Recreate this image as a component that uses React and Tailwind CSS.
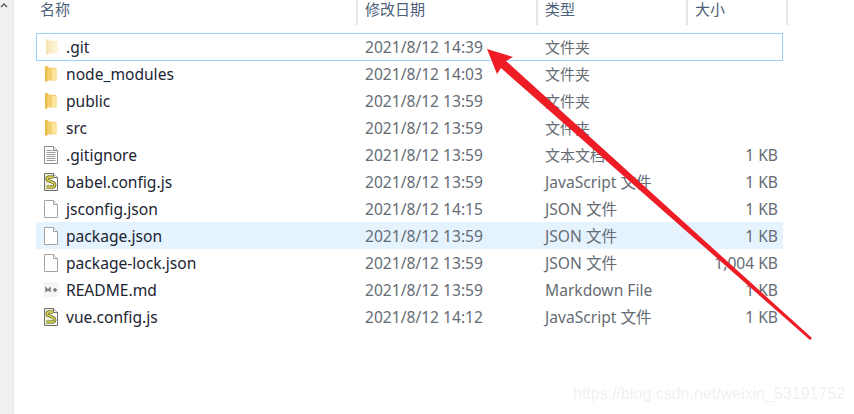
const files = [
  { name: ".git", date: "2021/8/12 14:39", type: "文件夹", size: "", icon: "folderFaded", box: true },
  { name: "node_modules", date: "2021/8/12 14:03", type: "文件夹", size: "", icon: "folder" },
  { name: "public", date: "2021/8/12 13:59", type: "文件夹", size: "", icon: "folder" },
  { name: "src", date: "2021/8/12 13:59", type: "文件夹", size: "", icon: "folder" },
  { name: ".gitignore", date: "2021/8/12 13:59", type: "文本文档", size: "1 KB", icon: "text" },
  { name: "babel.config.js", date: "2021/8/12 13:59", type: "JavaScript 文件", size: "1 KB", icon: "script" },
  { name: "jsconfig.json", date: "2021/8/12 14:15", type: "JSON 文件", size: "1 KB", icon: "blank" },
  { name: "package.json", date: "2021/8/12 13:59", type: "JSON 文件", size: "1 KB", icon: "blank", hover: true },
  { name: "package-lock.json", date: "2021/8/12 13:59", type: "JSON 文件", size: "1,004 KB", icon: "blank" },
  { name: "README.md", date: "2021/8/12 13:59", type: "Markdown File", size: "1 KB", icon: "md" },
  { name: "vue.config.js", date: "2021/8/12 14:12", type: "JavaScript 文件", size: "1 KB", icon: "script" },
];

function Folder({ faded }) {
  return (
    <svg width="14" height="18" viewBox="0 0 14 18" className={faded ? "opacity-40" : ""}>
      <path d="M1 1.5 L4 1 L5 2.5 L12.5 3 L12.5 15.5 L4 15.5 L2 17 L1 16 Z" fill="#f3cf6e" />
      <path d="M1 1.5 L3.5 1 L3.5 15.8 L2 17 L1 16 Z" fill="#e9bd4c" />
      <path d="M8 4 L12.5 4 L12.5 15 L8 15 Z" fill="#fbe49c" />
    </svg>
  );
}

function Sheet({ children, stroke = "#a3a3a3" }) {
  return (
    <svg width="16" height="20" viewBox="0 0 16 20">
      <path d="M1.5 1.5 H10.5 L14.5 5.5 V18.5 H1.5 Z" fill="#fff" stroke={stroke} />
      <path d="M10.5 1.5 V5.5 H14.5" fill="#efefef" stroke={stroke} />
      {children}
    </svg>
  );
}

function Icon({ kind }) {
  if (kind === "folder") return <Folder />;
  if (kind === "folderFaded") return <Folder faded />;
  if (kind === "blank") return <Sheet />;
  if (kind === "text")
    return (
      <Sheet stroke="#8c8c8c">
        <path d="M3.5 5.5 H9.5 M3.5 7.5 H12.5 M3.5 9.5 H12.5 M3.5 11.5 H12.5 M3.5 13.5 H12.5 M3.5 15.5 H12.5" stroke="#9a9a9a" strokeWidth="1" />
      </Sheet>
    );
  if (kind === "script")
    return (
      <Sheet stroke="#6e6e6e">
        <rect x="2" y="2" width="8" height="16" fill="#f1f1d8" />
        <path d="M10.5 5 H5.5 Q3 5.5 4.5 8 L11 11 Q13 13.5 10.5 15 H3.5" fill="none" stroke="#4d5a2a" strokeWidth="3" />
        <path d="M10.5 5 H5.5 Q3 5.5 4.5 8 L11 11 Q13 13.5 10.5 15 H3.5" fill="none" stroke="#efe04a" strokeWidth="1.4" />
      </Sheet>
    );
  return (
    <svg width="16" height="18" viewBox="0 0 16 18" className="blur-[0.3px]">
      <rect x="0.5" y="1" width="15" height="15" fill="#f4f4f4" />
      <path d="M3 11 V7 L5 9.5 L7 7 V11 M10 9 H14 M12 7 V11" fill="none" stroke="#707070" strokeWidth="1.3" />
    </svg>
  );
}

const cjk = "font-['Noto_Sans','Noto_Sans_CJK_SC',sans-serif]";
const hd = "border-r-2 border-[#e5e5e5] leading-[18px]";

export default function App() {
  return (
    <div className={`relative w-[854px] h-[414px] overflow-hidden bg-white flex ${cjk} text-[15px]`}>
      <aside className="w-[14px] shrink-0 bg-[#f0f0f0] border-r border-[#e6e6e6]">
        <svg width="13" height="9" viewBox="0 0 13 9" className="mt-px">
          <path d="M1 6 L4 3 L7 6" fill="none" stroke="#5a5a5a" strokeWidth="1.4" />
        </svg>
      </aside>
      <main className="flex-1 pl-[22px]">
        <header className="flex h-[25px] text-[#4c607a] w-[752px]">
          <div className={`w-[322px] pl-[4px] ${hd}`}>名称</div>
          <div className={`w-[180px] pl-[7px] ${hd}`}>修改日期</div>
          <div className={`w-[150px] pl-[7px] ${hd}`}>类型</div>
          <div className={`w-[100px] pl-[7px] ${hd}`}>大小</div>
        </header>
        <div className="mt-2 w-[747px]">
          {files.map((f) => {
            const pad = f.box ? "pt-px" : "pt-[3px]";
            const cjkOnly = f.type.startsWith("文");
            return (
              <div
                key={f.name}
                className={`flex items-center text-[15.6px] ${f.box ? "h-[28px] -mb-px border border-[#99d1ff]" : "h-[27px]"} ${f.hover ? "bg-[#e5f3ff]" : ""}`}
              >
                <div className="w-[30px] flex justify-center shrink-0">
                  <Icon kind={f.icon} />
                </div>
                <div className={`w-[299px] text-[#1b2433] shrink-0 ${pad} ${f.box ? "-ml-px" : ""}`}>{f.name}</div>
                <div className={`w-[180px] text-[#666c73] shrink-0 ${pad}`}>{f.date}</div>
                <div className={`w-[150px] text-[#666c73] shrink-0 ${cjkOnly ? "text-[15px] pt-px" : pad}`}>{f.type}</div>
                <div className={`w-[83px] text-right text-[#666c73] shrink-0 ${pad}`}>{f.size}</div>
              </div>
            );
          })}
        </div>
      </main>
      <svg width="854" height="414" viewBox="0 0 854 414" className="absolute inset-0 pointer-events-none">
        <polygon points="487,49 513,57 506,61 812,338 810,340 501,68 497,74" fill="#ee1c25" />
      </svg>
      <div className="absolute left-[573px] top-[382px] font-['Liberation_Sans',sans-serif] text-[16px] text-[#f0f0f0] blur-[0.5px] whitespace-nowrap">
        https://blog.csdn.net/weixin_53191752
      </div>
    </div>
  );
}
